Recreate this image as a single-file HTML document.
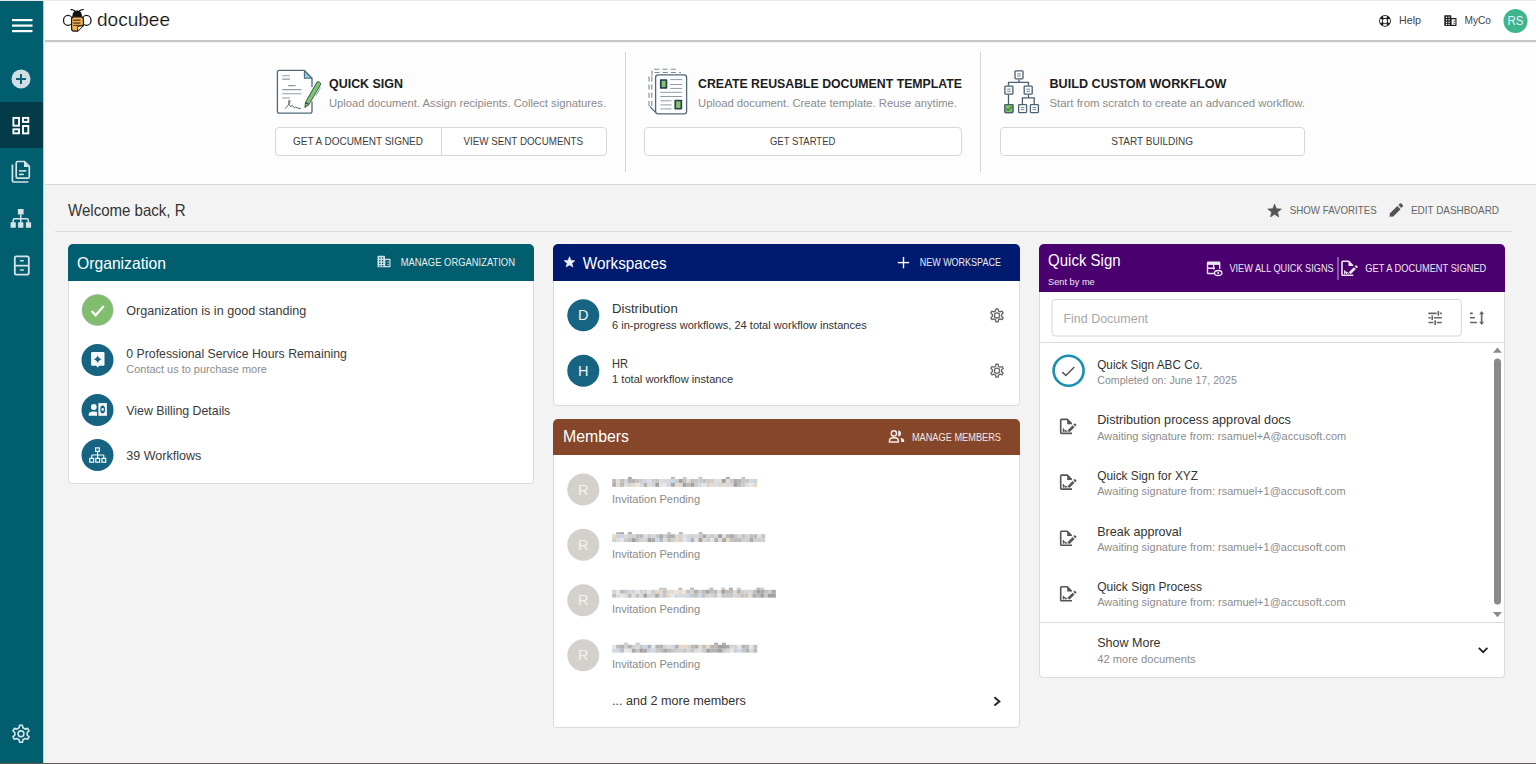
<!DOCTYPE html>
<html><head><meta charset="utf-8">
<style>
html,body{margin:0;padding:0;width:1536px;height:764px;overflow:hidden;background:#f3f3f3}
svg{display:block;font-family:"Liberation Sans",sans-serif}
</style></head><body>
<svg width="1536" height="764" viewBox="0 0 1536 764">
<defs><filter id="bl" x="-5%" y="-50%" width="110%" height="200%"><feGaussianBlur stdDeviation="0.45"/></filter></defs>
<rect x="0" y="0" width="1536" height="764" fill="#f3f3f3" />
<rect x="0" y="0" width="1536" height="1" fill="#e8e8e8" />
<rect x="44" y="1" width="1492" height="39" fill="#ffffff" />
<rect x="44" y="40" width="1492" height="2" fill="#c8c8c8" />
<rect x="44" y="42" width="1492" height="1" fill="#eef3f5" />
<rect x="44" y="43" width="1492" height="141" fill="#fdfdfd" />
<rect x="44" y="184" width="1492" height="1" fill="#d6d9d9" />
<rect x="0" y="1" width="43.5" height="762" fill="#015e6f" />
<rect x="43.5" y="1" width="1.3" height="762" fill="#fbfafa" />
<rect x="0" y="102" width="43" height="46" fill="#033c48" />
<rect x="0" y="763" width="1536" height="1" fill="#5e5a58" />
<text x="97" y="26" font-size="19" fill="#111" textLength="73" lengthAdjust="spacingAndGlyphs" stroke="#fff" stroke-width="0.2">docubee</text>
<text x="1399" y="24.2" font-size="10.8" fill="#444" textLength="22" lengthAdjust="spacingAndGlyphs" >Help</text>
<text x="1464.5" y="24.2" font-size="10.8" fill="#444" textLength="26.5" lengthAdjust="spacingAndGlyphs" >MyCo</text>
<circle cx="1515.5" cy="21" r="12" fill="#3db58d"/>
<text x="1515.5" y="25.3" font-size="12" fill="#eef" textLength="16" lengthAdjust="spacingAndGlyphs" text-anchor="middle" >RS</text>
<rect x="625" y="52" width="1" height="120" fill="#d3d6d7"/>
<rect x="980" y="52" width="1" height="120" fill="#d3d6d7"/>
<text x="329" y="88" font-size="13.6" fill="#1c1c1c" font-weight="bold" textLength="74" lengthAdjust="spacingAndGlyphs" >QUICK SIGN</text>
<text x="329" y="107" font-size="10.8" fill="#8c8c8c" textLength="277" lengthAdjust="spacingAndGlyphs" >Upload document. Assign recipients. Collect signatures.</text>
<text x="698" y="88" font-size="13.6" fill="#1c1c1c" font-weight="bold" textLength="264" lengthAdjust="spacingAndGlyphs" >CREATE REUSABLE DOCUMENT TEMPLATE</text>
<text x="698" y="107" font-size="10.8" fill="#8c8c8c" textLength="259" lengthAdjust="spacingAndGlyphs" >Upload document. Create template. Reuse anytime.</text>
<text x="1049.5" y="88" font-size="13.6" fill="#1c1c1c" font-weight="bold" textLength="177" lengthAdjust="spacingAndGlyphs" >BUILD CUSTOM WORKFLOW</text>
<text x="1049.5" y="107" font-size="10.8" fill="#8c8c8c" textLength="255.5" lengthAdjust="spacingAndGlyphs" >Start from scratch to create an advanced workflow.</text>
<rect x="275.5" y="127.5" width="331" height="28" fill="#fff" rx="3.5" stroke="#d5d8d8" stroke-width="1" />
<rect x="441" y="128" width="1" height="27" fill="#d5d8d8" />
<rect x="644.5" y="127.5" width="317" height="28" fill="#fff" rx="3.5" stroke="#d5d8d8" stroke-width="1" />
<rect x="1000.5" y="127.5" width="304" height="28" fill="#fff" rx="3.5" stroke="#d5d8d8" stroke-width="1" />
<text x="293" y="145" font-size="10.6" fill="#3d3d3d" textLength="130" lengthAdjust="spacingAndGlyphs" >GET A DOCUMENT SIGNED</text>
<text x="463.5" y="145" font-size="10.6" fill="#3d3d3d" textLength="119.5" lengthAdjust="spacingAndGlyphs" >VIEW SENT DOCUMENTS</text>
<text x="770" y="145" font-size="10.6" fill="#3d3d3d" textLength="65.3" lengthAdjust="spacingAndGlyphs" >GET STARTED</text>
<text x="1111.3" y="145" font-size="10.6" fill="#3d3d3d" textLength="81.7" lengthAdjust="spacingAndGlyphs" >START BUILDING</text>
<text x="68" y="216" font-size="16.5" fill="#333" textLength="117.6" lengthAdjust="spacingAndGlyphs" >Welcome back, R</text>
<rect x="55" y="231" width="1457" height="1" fill="#d9dcdc" />
<text x="1289.7" y="214" font-size="11" fill="#666" textLength="87" lengthAdjust="spacingAndGlyphs" >SHOW FAVORITES</text>
<text x="1411" y="214" font-size="11" fill="#666" textLength="88" lengthAdjust="spacingAndGlyphs" >EDIT DASHBOARD</text>
<path d="M68.5 281 V480 a3.5 3.5 0 0 0 3.5 3.5 H530 a3.5 3.5 0 0 0 3.5 -3.5 V281" fill="#fff" stroke="#d9dcdc"/>
<path d="M68 281 V249 a5 5 0 0 1 5 -5 H529 a5 5 0 0 1 5 5 V281 Z" fill="#015e6f"/>
<path d="M553.5 281 V402 a3.5 3.5 0 0 0 3.5 3.5 H1016 a3.5 3.5 0 0 0 3.5 -3.5 V281" fill="#fff" stroke="#d9dcdc"/>
<path d="M553 281 V249 a5 5 0 0 1 5 -5 H1015 a5 5 0 0 1 5 5 V281 Z" fill="#001a6f"/>
<path d="M553.5 455 V724 a3.5 3.5 0 0 0 3.5 3.5 H1016 a3.5 3.5 0 0 0 3.5 -3.5 V455" fill="#fff" stroke="#d9dcdc"/>
<path d="M553 455 V424 a5 5 0 0 1 5 -5 H1015 a5 5 0 0 1 5 5 V455 Z" fill="#85462a"/>
<path d="M1039.5 292 V674 a3.5 3.5 0 0 0 3.5 3.5 H1501 a3.5 3.5 0 0 0 3.5 -3.5 V292" fill="#fff" stroke="#d9dcdc"/>
<path d="M1039 292 V249 a5 5 0 0 1 5 -5 H1500 a5 5 0 0 1 5 5 V292 Z" fill="#4a006e"/>
<text x="77" y="268.8" font-size="16.5" fill="#fff" textLength="89" lengthAdjust="spacingAndGlyphs" >Organization</text>
<text x="400.7" y="266.1" font-size="10.5" fill="#e8eef0" textLength="114.3" lengthAdjust="spacingAndGlyphs" >MANAGE ORGANIZATION</text>
<circle cx="97.6" cy="310" r="15.6" fill="#80bd6d" stroke="#a9b0a8" stroke-width="0.6"/>
<circle cx="97.5" cy="360" r="16" fill="#176482"/>
<circle cx="97.5" cy="410" r="16" fill="#176482"/>
<circle cx="97.5" cy="455" r="16" fill="#176482"/>
<text x="126.3" y="314.9" font-size="12.5" fill="#3a3a3a" textLength="180" lengthAdjust="spacingAndGlyphs" >Organization is in good standing</text>
<text x="126.3" y="357.8" font-size="13" fill="#3a3a3a" textLength="220.6" lengthAdjust="spacingAndGlyphs" >0 Professional Service Hours Remaining</text>
<text x="126.3" y="372.7" font-size="10.7" fill="#8c8c8c" textLength="140.6" lengthAdjust="spacingAndGlyphs" >Contact us to purchase more</text>
<text x="126.3" y="414.9" font-size="13" fill="#3a3a3a" textLength="104" lengthAdjust="spacingAndGlyphs" >View Billing Details</text>
<text x="126.3" y="460.2" font-size="13" fill="#3a3a3a" textLength="75" lengthAdjust="spacingAndGlyphs" >39 Workflows</text>
<text x="582.8" y="268.8" font-size="16.5" fill="#fff" textLength="83.8" lengthAdjust="spacingAndGlyphs" >Workspaces</text>
<text x="919.7" y="266.3" font-size="10.5" fill="#e8ecf4" textLength="81.2" lengthAdjust="spacingAndGlyphs" >NEW WORKSPACE</text>
<circle cx="583.3" cy="315.3" r="16" fill="#176482"/>
<text x="583.3" y="320.3" font-size="14.5" fill="#eef4f6" text-anchor="middle" >D</text>
<circle cx="583.3" cy="370.7" r="16" fill="#176482"/>
<text x="583.3" y="375.7" font-size="14.5" fill="#eef4f6" text-anchor="middle" >H</text>
<text x="612" y="313.3" font-size="13" fill="#333" textLength="65.7" lengthAdjust="spacingAndGlyphs" >Distribution</text>
<text x="612" y="328.75" font-size="11.5" fill="#333" textLength="254.7" lengthAdjust="spacingAndGlyphs" >6 in-progress workflows, 24 total workflow instances</text>
<text x="612" y="367.9" font-size="13" fill="#333" textLength="16" lengthAdjust="spacingAndGlyphs" >HR</text>
<text x="612" y="382.9" font-size="11.5" fill="#333" textLength="121.3" lengthAdjust="spacingAndGlyphs" >1 total workflow instance</text>
<text x="563" y="441.6" font-size="16.5" fill="#fff" textLength="66" lengthAdjust="spacingAndGlyphs" >Members</text>
<text x="911.9" y="440.6" font-size="10.5" fill="#f2e8e2" textLength="89.1" lengthAdjust="spacingAndGlyphs" >MANAGE MEMBERS</text>
<circle cx="583.3" cy="489.5" r="16" fill="#d4d0cb"/>
<text x="583.3" y="494.5" font-size="14.5" fill="#f4f2f0" text-anchor="middle" >R</text>
<g filter="url(#bl)">
<rect x="612.20" y="479.00" width="3.97" height="3.95" fill="#bababa"/>
<rect x="612.20" y="482.90" width="3.97" height="3.95" fill="#b2b2b2"/>
<rect x="616.12" y="479.00" width="3.97" height="3.95" fill="#dedede"/>
<rect x="616.12" y="482.90" width="3.97" height="3.95" fill="#e8d8c4"/>
<rect x="620.04" y="479.00" width="3.97" height="3.95" fill="#c0c0c0"/>
<rect x="620.04" y="482.90" width="3.97" height="3.95" fill="#bababa"/>
<rect x="623.96" y="479.00" width="3.97" height="3.95" fill="#d4d4d4"/>
<rect x="623.96" y="482.90" width="3.97" height="3.95" fill="#dedede"/>
<rect x="627.88" y="479.00" width="3.97" height="3.95" fill="#b2b2b2"/>
<rect x="627.88" y="482.90" width="3.97" height="3.95" fill="#d4d4d4"/>
<rect x="627.88" y="476.90" width="3.92" height="2.1" fill="#aaaaaa"/>
<rect x="631.79" y="479.00" width="3.97" height="3.95" fill="#b2b2b2"/>
<rect x="631.79" y="482.90" width="3.97" height="3.95" fill="#e8d8c4"/>
<rect x="635.71" y="479.00" width="3.97" height="3.95" fill="#c0c0c0"/>
<rect x="635.71" y="482.90" width="3.97" height="3.95" fill="#e6e6e6"/>
<rect x="639.63" y="479.00" width="3.97" height="3.95" fill="#cccccc"/>
<rect x="639.63" y="482.90" width="3.97" height="3.95" fill="#d8d8d8"/>
<rect x="643.55" y="479.00" width="3.97" height="3.95" fill="#c8d8ea"/>
<rect x="643.55" y="482.90" width="3.97" height="3.95" fill="#b2b2b2"/>
<rect x="647.47" y="479.00" width="3.97" height="3.95" fill="#dedede"/>
<rect x="647.47" y="482.90" width="3.97" height="3.95" fill="#dedede"/>
<rect x="651.39" y="479.00" width="3.97" height="3.95" fill="#cccccc"/>
<rect x="651.39" y="482.90" width="3.97" height="3.95" fill="#d4d4d4"/>
<rect x="655.31" y="479.00" width="3.97" height="3.95" fill="#c6c6c6"/>
<rect x="655.31" y="482.90" width="3.97" height="3.95" fill="#a0a0a0"/>
<rect x="659.23" y="479.00" width="3.97" height="3.95" fill="#dedede"/>
<rect x="659.23" y="482.90" width="3.97" height="3.95" fill="#e6e6e6"/>
<rect x="663.15" y="479.00" width="3.97" height="3.95" fill="#d8d8d8"/>
<rect x="663.15" y="482.90" width="3.97" height="3.95" fill="#e6e6e6"/>
<rect x="667.06" y="479.00" width="3.97" height="3.95" fill="#d8d8d8"/>
<rect x="667.06" y="482.90" width="3.97" height="3.95" fill="#c8d8ea"/>
<rect x="670.98" y="479.00" width="3.97" height="3.95" fill="#c8d8ea"/>
<rect x="670.98" y="482.90" width="3.97" height="3.95" fill="#aaaaaa"/>
<rect x="670.98" y="476.90" width="3.92" height="2.1" fill="#b9b9b9"/>
<rect x="674.90" y="479.00" width="3.97" height="3.95" fill="#cccccc"/>
<rect x="674.90" y="482.90" width="3.97" height="3.95" fill="#e8d8c4"/>
<rect x="678.82" y="479.00" width="3.97" height="3.95" fill="#a0a0a0"/>
<rect x="678.82" y="482.90" width="3.97" height="3.95" fill="#d8d8d8"/>
<rect x="682.74" y="479.00" width="3.97" height="3.95" fill="#c0c0c0"/>
<rect x="682.74" y="482.90" width="3.97" height="3.95" fill="#a0a0a0"/>
<rect x="682.74" y="476.90" width="3.92" height="2.1" fill="#c8c8c8"/>
<rect x="686.66" y="479.00" width="3.97" height="3.95" fill="#e8d8c4"/>
<rect x="686.66" y="482.90" width="3.97" height="3.95" fill="#bababa"/>
<rect x="690.58" y="479.00" width="3.97" height="3.95" fill="#c0c0c0"/>
<rect x="690.58" y="482.90" width="3.97" height="3.95" fill="#a0a0a0"/>
<rect x="694.50" y="479.00" width="3.97" height="3.95" fill="#c6c6c6"/>
<rect x="694.50" y="482.90" width="3.97" height="3.95" fill="#cccccc"/>
<rect x="698.42" y="479.00" width="3.97" height="3.95" fill="#cccccc"/>
<rect x="698.42" y="482.90" width="3.97" height="3.95" fill="#d8d8d8"/>
<rect x="698.42" y="476.90" width="3.92" height="2.1" fill="#c8c8c8"/>
<rect x="702.34" y="479.00" width="3.97" height="3.95" fill="#c0c0c0"/>
<rect x="702.34" y="482.90" width="3.97" height="3.95" fill="#e6e6e6"/>
<rect x="706.25" y="479.00" width="3.97" height="3.95" fill="#cccccc"/>
<rect x="706.25" y="482.90" width="3.97" height="3.95" fill="#d4d4d4"/>
<rect x="710.17" y="479.00" width="3.97" height="3.95" fill="#cccccc"/>
<rect x="710.17" y="482.90" width="3.97" height="3.95" fill="#e8d8c4"/>
<rect x="714.09" y="479.00" width="3.97" height="3.95" fill="#dedede"/>
<rect x="714.09" y="482.90" width="3.97" height="3.95" fill="#dedede"/>
<rect x="718.01" y="479.00" width="3.97" height="3.95" fill="#dedede"/>
<rect x="718.01" y="482.90" width="3.97" height="3.95" fill="#d8d8d8"/>
<rect x="721.93" y="479.00" width="3.97" height="3.95" fill="#a0a0a0"/>
<rect x="721.93" y="482.90" width="3.97" height="3.95" fill="#e8d8c4"/>
<rect x="725.85" y="479.00" width="3.97" height="3.95" fill="#dedede"/>
<rect x="725.85" y="482.90" width="3.97" height="3.95" fill="#d8d8d8"/>
<rect x="725.85" y="476.90" width="3.92" height="2.1" fill="#aaaaaa"/>
<rect x="729.77" y="479.00" width="3.97" height="3.95" fill="#c6c6c6"/>
<rect x="729.77" y="482.90" width="3.97" height="3.95" fill="#d8d8d8"/>
<rect x="733.69" y="479.00" width="3.97" height="3.95" fill="#aaaaaa"/>
<rect x="733.69" y="482.90" width="3.97" height="3.95" fill="#a0a0a0"/>
<rect x="737.61" y="479.00" width="3.97" height="3.95" fill="#b2b2b2"/>
<rect x="737.61" y="482.90" width="3.97" height="3.95" fill="#bababa"/>
<rect x="741.52" y="479.00" width="3.97" height="3.95" fill="#c6c6c6"/>
<rect x="741.52" y="482.90" width="3.97" height="3.95" fill="#cccccc"/>
<rect x="741.52" y="476.90" width="3.92" height="2.1" fill="#c8c8c8"/>
<rect x="745.44" y="479.00" width="3.97" height="3.95" fill="#c6c6c6"/>
<rect x="745.44" y="482.90" width="3.97" height="3.95" fill="#dedede"/>
<rect x="749.36" y="479.00" width="3.97" height="3.95" fill="#c8d8ea"/>
<rect x="749.36" y="482.90" width="3.97" height="3.95" fill="#e6e6e6"/>
<rect x="753.28" y="479.00" width="3.97" height="3.95" fill="#d0d0d0"/>
<rect x="753.28" y="482.90" width="3.97" height="3.95" fill="#e8d8c4"/>
</g>
<text x="612" y="502.5" font-size="11.2" fill="#8a8a8a" textLength="88.1" lengthAdjust="spacingAndGlyphs" >Invitation Pending</text>
<circle cx="583.3" cy="544.7" r="16" fill="#d4d0cb"/>
<text x="583.3" y="549.7" font-size="14.5" fill="#f4f2f0" text-anchor="middle" >R</text>
<g filter="url(#bl)">
<rect x="612.20" y="534.20" width="3.97" height="3.95" fill="#e8d8c4"/>
<rect x="612.20" y="538.10" width="3.97" height="3.95" fill="#d0d0d0"/>
<rect x="616.12" y="534.20" width="3.97" height="3.95" fill="#d0d0d0"/>
<rect x="616.12" y="538.10" width="3.97" height="3.95" fill="#dedede"/>
<rect x="616.12" y="532.10" width="3.92" height="2.1" fill="#b9b9b9"/>
<rect x="620.05" y="534.20" width="3.97" height="3.95" fill="#c8d8ea"/>
<rect x="620.05" y="538.10" width="3.97" height="3.95" fill="#e6e6e6"/>
<rect x="620.05" y="532.10" width="3.92" height="2.1" fill="#aaaaaa"/>
<rect x="623.97" y="534.20" width="3.97" height="3.95" fill="#d8d8d8"/>
<rect x="623.97" y="538.10" width="3.97" height="3.95" fill="#cccccc"/>
<rect x="627.89" y="534.20" width="3.97" height="3.95" fill="#d0d0d0"/>
<rect x="627.89" y="538.10" width="3.97" height="3.95" fill="#c0c0c0"/>
<rect x="627.89" y="532.10" width="3.92" height="2.1" fill="#aaaaaa"/>
<rect x="631.82" y="534.20" width="3.97" height="3.95" fill="#d0d0d0"/>
<rect x="631.82" y="538.10" width="3.97" height="3.95" fill="#a0a0a0"/>
<rect x="635.74" y="534.20" width="3.97" height="3.95" fill="#bababa"/>
<rect x="635.74" y="538.10" width="3.97" height="3.95" fill="#c0c0c0"/>
<rect x="639.66" y="534.20" width="3.97" height="3.95" fill="#bababa"/>
<rect x="639.66" y="538.10" width="3.97" height="3.95" fill="#d4d4d4"/>
<rect x="643.58" y="534.20" width="3.97" height="3.95" fill="#dedede"/>
<rect x="643.58" y="538.10" width="3.97" height="3.95" fill="#d4d4d4"/>
<rect x="647.51" y="534.20" width="3.97" height="3.95" fill="#cccccc"/>
<rect x="647.51" y="538.10" width="3.97" height="3.95" fill="#a0a0a0"/>
<rect x="651.43" y="534.20" width="3.97" height="3.95" fill="#c8d8ea"/>
<rect x="651.43" y="538.10" width="3.97" height="3.95" fill="#aaaaaa"/>
<rect x="655.35" y="534.20" width="3.97" height="3.95" fill="#c6c6c6"/>
<rect x="655.35" y="538.10" width="3.97" height="3.95" fill="#c8d8ea"/>
<rect x="659.28" y="534.20" width="3.97" height="3.95" fill="#aaaaaa"/>
<rect x="659.28" y="538.10" width="3.97" height="3.95" fill="#bababa"/>
<rect x="663.20" y="534.20" width="3.97" height="3.95" fill="#cccccc"/>
<rect x="663.20" y="538.10" width="3.97" height="3.95" fill="#dedede"/>
<rect x="667.12" y="534.20" width="3.97" height="3.95" fill="#b2b2b2"/>
<rect x="667.12" y="538.10" width="3.97" height="3.95" fill="#c0c0c0"/>
<rect x="667.12" y="532.10" width="3.92" height="2.1" fill="#c8c8c8"/>
<rect x="671.05" y="534.20" width="3.97" height="3.95" fill="#b2b2b2"/>
<rect x="671.05" y="538.10" width="3.97" height="3.95" fill="#d0d0d0"/>
<rect x="674.97" y="534.20" width="3.97" height="3.95" fill="#e8d8c4"/>
<rect x="674.97" y="538.10" width="3.97" height="3.95" fill="#e8d8c4"/>
<rect x="678.89" y="534.20" width="3.97" height="3.95" fill="#c8d8ea"/>
<rect x="678.89" y="538.10" width="3.97" height="3.95" fill="#d0d0d0"/>
<rect x="678.89" y="532.10" width="3.92" height="2.1" fill="#b9b9b9"/>
<rect x="682.82" y="534.20" width="3.97" height="3.95" fill="#dedede"/>
<rect x="682.82" y="538.10" width="3.97" height="3.95" fill="#e6e6e6"/>
<rect x="686.74" y="534.20" width="3.97" height="3.95" fill="#d4d4d4"/>
<rect x="686.74" y="538.10" width="3.97" height="3.95" fill="#c8d8ea"/>
<rect x="690.66" y="534.20" width="3.97" height="3.95" fill="#d0d0d0"/>
<rect x="690.66" y="538.10" width="3.97" height="3.95" fill="#b2b2b2"/>
<rect x="694.58" y="534.20" width="3.97" height="3.95" fill="#d4d4d4"/>
<rect x="694.58" y="538.10" width="3.97" height="3.95" fill="#e6e6e6"/>
<rect x="698.51" y="534.20" width="3.97" height="3.95" fill="#cccccc"/>
<rect x="698.51" y="538.10" width="3.97" height="3.95" fill="#a0a0a0"/>
<rect x="698.51" y="532.10" width="3.92" height="2.1" fill="#b9b9b9"/>
<rect x="702.43" y="534.20" width="3.97" height="3.95" fill="#aaaaaa"/>
<rect x="702.43" y="538.10" width="3.97" height="3.95" fill="#d8d8d8"/>
<rect x="706.35" y="534.20" width="3.97" height="3.95" fill="#d0d0d0"/>
<rect x="706.35" y="538.10" width="3.97" height="3.95" fill="#cccccc"/>
<rect x="710.28" y="534.20" width="3.97" height="3.95" fill="#c6c6c6"/>
<rect x="710.28" y="538.10" width="3.97" height="3.95" fill="#e6e6e6"/>
<rect x="714.20" y="534.20" width="3.97" height="3.95" fill="#d4d4d4"/>
<rect x="714.20" y="538.10" width="3.97" height="3.95" fill="#b2b2b2"/>
<rect x="718.12" y="534.20" width="3.97" height="3.95" fill="#a0a0a0"/>
<rect x="718.12" y="538.10" width="3.97" height="3.95" fill="#dedede"/>
<rect x="722.05" y="534.20" width="3.97" height="3.95" fill="#dedede"/>
<rect x="722.05" y="538.10" width="3.97" height="3.95" fill="#aaaaaa"/>
<rect x="725.97" y="534.20" width="3.97" height="3.95" fill="#bababa"/>
<rect x="725.97" y="538.10" width="3.97" height="3.95" fill="#e8d8c4"/>
<rect x="729.89" y="534.20" width="3.97" height="3.95" fill="#aaaaaa"/>
<rect x="729.89" y="538.10" width="3.97" height="3.95" fill="#c0c0c0"/>
<rect x="733.82" y="534.20" width="3.97" height="3.95" fill="#c6c6c6"/>
<rect x="733.82" y="538.10" width="3.97" height="3.95" fill="#bababa"/>
<rect x="737.74" y="534.20" width="3.97" height="3.95" fill="#d8d8d8"/>
<rect x="737.74" y="538.10" width="3.97" height="3.95" fill="#bababa"/>
<rect x="741.66" y="534.20" width="3.97" height="3.95" fill="#c0c0c0"/>
<rect x="741.66" y="538.10" width="3.97" height="3.95" fill="#d0d0d0"/>
<rect x="745.58" y="534.20" width="3.97" height="3.95" fill="#d4d4d4"/>
<rect x="745.58" y="538.10" width="3.97" height="3.95" fill="#d0d0d0"/>
<rect x="749.51" y="534.20" width="3.97" height="3.95" fill="#c0c0c0"/>
<rect x="749.51" y="538.10" width="3.97" height="3.95" fill="#aaaaaa"/>
<rect x="753.43" y="534.20" width="3.97" height="3.95" fill="#bababa"/>
<rect x="753.43" y="538.10" width="3.97" height="3.95" fill="#cccccc"/>
<rect x="757.35" y="534.20" width="3.97" height="3.95" fill="#dedede"/>
<rect x="757.35" y="538.10" width="3.97" height="3.95" fill="#cccccc"/>
<rect x="761.28" y="534.20" width="3.97" height="3.95" fill="#c6c6c6"/>
<rect x="761.28" y="538.10" width="3.97" height="3.95" fill="#d0d0d0"/>
</g>
<text x="612" y="557.7" font-size="11.2" fill="#8a8a8a" textLength="88.1" lengthAdjust="spacingAndGlyphs" >Invitation Pending</text>
<circle cx="583.3" cy="600.3" r="16" fill="#d4d0cb"/>
<text x="583.3" y="605.3" font-size="14.5" fill="#f4f2f0" text-anchor="middle" >R</text>
<g filter="url(#bl)">
<rect x="612.20" y="589.80" width="3.95" height="3.95" fill="#d4d4d4"/>
<rect x="612.20" y="593.70" width="3.95" height="3.95" fill="#c0c0c0"/>
<rect x="616.10" y="589.80" width="3.95" height="3.95" fill="#e6e6e6"/>
<rect x="616.10" y="593.70" width="3.95" height="3.95" fill="#dedede"/>
<rect x="619.99" y="589.80" width="3.95" height="3.95" fill="#bababa"/>
<rect x="619.99" y="593.70" width="3.95" height="3.95" fill="#e6e6e6"/>
<rect x="623.89" y="589.80" width="3.95" height="3.95" fill="#c6c6c6"/>
<rect x="623.89" y="593.70" width="3.95" height="3.95" fill="#dedede"/>
<rect x="627.78" y="589.80" width="3.95" height="3.95" fill="#c8d8ea"/>
<rect x="627.78" y="593.70" width="3.95" height="3.95" fill="#bababa"/>
<rect x="631.68" y="589.80" width="3.95" height="3.95" fill="#d4d4d4"/>
<rect x="631.68" y="593.70" width="3.95" height="3.95" fill="#dedede"/>
<rect x="635.57" y="589.80" width="3.95" height="3.95" fill="#e6e6e6"/>
<rect x="635.57" y="593.70" width="3.95" height="3.95" fill="#c0c0c0"/>
<rect x="639.47" y="589.80" width="3.95" height="3.95" fill="#d0d0d0"/>
<rect x="639.47" y="593.70" width="3.95" height="3.95" fill="#d8d8d8"/>
<rect x="643.36" y="589.80" width="3.95" height="3.95" fill="#d4d4d4"/>
<rect x="643.36" y="593.70" width="3.95" height="3.95" fill="#a0a0a0"/>
<rect x="647.26" y="589.80" width="3.95" height="3.95" fill="#e6e6e6"/>
<rect x="647.26" y="593.70" width="3.95" height="3.95" fill="#d0d0d0"/>
<rect x="651.15" y="589.80" width="3.95" height="3.95" fill="#cccccc"/>
<rect x="651.15" y="593.70" width="3.95" height="3.95" fill="#d4d4d4"/>
<rect x="655.05" y="589.80" width="3.95" height="3.95" fill="#e8d8c4"/>
<rect x="655.05" y="593.70" width="3.95" height="3.95" fill="#aaaaaa"/>
<rect x="658.94" y="589.80" width="3.95" height="3.95" fill="#d8d8d8"/>
<rect x="658.94" y="593.70" width="3.95" height="3.95" fill="#d4d4d4"/>
<rect x="658.94" y="587.70" width="3.90" height="2.1" fill="#c8c8c8"/>
<rect x="662.84" y="589.80" width="3.95" height="3.95" fill="#c0c0c0"/>
<rect x="662.84" y="593.70" width="3.95" height="3.95" fill="#c6c6c6"/>
<rect x="662.84" y="587.70" width="3.90" height="2.1" fill="#c8c8c8"/>
<rect x="666.73" y="589.80" width="3.95" height="3.95" fill="#d8d8d8"/>
<rect x="666.73" y="593.70" width="3.95" height="3.95" fill="#e8d8c4"/>
<rect x="670.63" y="589.80" width="3.95" height="3.95" fill="#e8d8c4"/>
<rect x="670.63" y="593.70" width="3.95" height="3.95" fill="#e6e6e6"/>
<rect x="674.52" y="589.80" width="3.95" height="3.95" fill="#e6e6e6"/>
<rect x="674.52" y="593.70" width="3.95" height="3.95" fill="#c8d8ea"/>
<rect x="678.42" y="589.80" width="3.95" height="3.95" fill="#e8d8c4"/>
<rect x="678.42" y="593.70" width="3.95" height="3.95" fill="#d8d8d8"/>
<rect x="678.42" y="587.70" width="3.90" height="2.1" fill="#b9b9b9"/>
<rect x="682.31" y="589.80" width="3.95" height="3.95" fill="#e6e6e6"/>
<rect x="682.31" y="593.70" width="3.95" height="3.95" fill="#d8d8d8"/>
<rect x="686.21" y="589.80" width="3.95" height="3.95" fill="#c0c0c0"/>
<rect x="686.21" y="593.70" width="3.95" height="3.95" fill="#c8d8ea"/>
<rect x="690.10" y="589.80" width="3.95" height="3.95" fill="#d4d4d4"/>
<rect x="690.10" y="593.70" width="3.95" height="3.95" fill="#c6c6c6"/>
<rect x="690.10" y="587.70" width="3.90" height="2.1" fill="#b9b9b9"/>
<rect x="694.00" y="589.80" width="3.95" height="3.95" fill="#aaaaaa"/>
<rect x="694.00" y="593.70" width="3.95" height="3.95" fill="#c0c0c0"/>
<rect x="697.90" y="589.80" width="3.95" height="3.95" fill="#cccccc"/>
<rect x="697.90" y="593.70" width="3.95" height="3.95" fill="#c8d8ea"/>
<rect x="701.79" y="589.80" width="3.95" height="3.95" fill="#bababa"/>
<rect x="701.79" y="593.70" width="3.95" height="3.95" fill="#c0c0c0"/>
<rect x="705.69" y="589.80" width="3.95" height="3.95" fill="#a0a0a0"/>
<rect x="705.69" y="593.70" width="3.95" height="3.95" fill="#d0d0d0"/>
<rect x="709.58" y="589.80" width="3.95" height="3.95" fill="#bababa"/>
<rect x="709.58" y="593.70" width="3.95" height="3.95" fill="#d4d4d4"/>
<rect x="709.58" y="587.70" width="3.90" height="2.1" fill="#b9b9b9"/>
<rect x="713.48" y="589.80" width="3.95" height="3.95" fill="#bababa"/>
<rect x="713.48" y="593.70" width="3.95" height="3.95" fill="#c6c6c6"/>
<rect x="717.37" y="589.80" width="3.95" height="3.95" fill="#e8d8c4"/>
<rect x="717.37" y="593.70" width="3.95" height="3.95" fill="#e6e6e6"/>
<rect x="721.27" y="589.80" width="3.95" height="3.95" fill="#a0a0a0"/>
<rect x="721.27" y="593.70" width="3.95" height="3.95" fill="#c6c6c6"/>
<rect x="721.27" y="587.70" width="3.90" height="2.1" fill="#c8c8c8"/>
<rect x="725.16" y="589.80" width="3.95" height="3.95" fill="#bababa"/>
<rect x="725.16" y="593.70" width="3.95" height="3.95" fill="#c6c6c6"/>
<rect x="729.06" y="589.80" width="3.95" height="3.95" fill="#bababa"/>
<rect x="729.06" y="593.70" width="3.95" height="3.95" fill="#c6c6c6"/>
<rect x="729.06" y="587.70" width="3.90" height="2.1" fill="#aaaaaa"/>
<rect x="732.95" y="589.80" width="3.95" height="3.95" fill="#e8d8c4"/>
<rect x="732.95" y="593.70" width="3.95" height="3.95" fill="#d8d8d8"/>
<rect x="736.85" y="589.80" width="3.95" height="3.95" fill="#b2b2b2"/>
<rect x="736.85" y="593.70" width="3.95" height="3.95" fill="#d0d0d0"/>
<rect x="736.85" y="587.70" width="3.90" height="2.1" fill="#c8c8c8"/>
<rect x="740.74" y="589.80" width="3.95" height="3.95" fill="#d0d0d0"/>
<rect x="740.74" y="593.70" width="3.95" height="3.95" fill="#c0c0c0"/>
<rect x="744.64" y="589.80" width="3.95" height="3.95" fill="#d0d0d0"/>
<rect x="744.64" y="593.70" width="3.95" height="3.95" fill="#c6c6c6"/>
<rect x="748.53" y="589.80" width="3.95" height="3.95" fill="#d4d4d4"/>
<rect x="748.53" y="593.70" width="3.95" height="3.95" fill="#e8d8c4"/>
<rect x="752.43" y="589.80" width="3.95" height="3.95" fill="#c0c0c0"/>
<rect x="752.43" y="593.70" width="3.95" height="3.95" fill="#aaaaaa"/>
<rect x="756.32" y="589.80" width="3.95" height="3.95" fill="#a0a0a0"/>
<rect x="756.32" y="593.70" width="3.95" height="3.95" fill="#bababa"/>
<rect x="756.32" y="587.70" width="3.90" height="2.1" fill="#b9b9b9"/>
<rect x="760.22" y="589.80" width="3.95" height="3.95" fill="#aaaaaa"/>
<rect x="760.22" y="593.70" width="3.95" height="3.95" fill="#a0a0a0"/>
<rect x="760.22" y="587.70" width="3.90" height="2.1" fill="#c8c8c8"/>
<rect x="764.11" y="589.80" width="3.95" height="3.95" fill="#c0c0c0"/>
<rect x="764.11" y="593.70" width="3.95" height="3.95" fill="#c6c6c6"/>
<rect x="768.01" y="589.80" width="3.95" height="3.95" fill="#cccccc"/>
<rect x="768.01" y="593.70" width="3.95" height="3.95" fill="#a0a0a0"/>
<rect x="771.90" y="589.80" width="3.95" height="3.95" fill="#aaaaaa"/>
<rect x="771.90" y="593.70" width="3.95" height="3.95" fill="#a0a0a0"/>
</g>
<text x="612" y="613.3" font-size="11.2" fill="#8a8a8a" textLength="88.1" lengthAdjust="spacingAndGlyphs" >Invitation Pending</text>
<circle cx="583.3" cy="655.3" r="16" fill="#d4d0cb"/>
<text x="583.3" y="660.3" font-size="14.5" fill="#f4f2f0" text-anchor="middle" >R</text>
<g filter="url(#bl)">
<rect x="612.20" y="644.80" width="3.97" height="3.95" fill="#e6e6e6"/>
<rect x="612.20" y="648.70" width="3.97" height="3.95" fill="#d8d8d8"/>
<rect x="616.12" y="644.80" width="3.97" height="3.95" fill="#bababa"/>
<rect x="616.12" y="648.70" width="3.97" height="3.95" fill="#c8d8ea"/>
<rect x="620.04" y="644.80" width="3.97" height="3.95" fill="#b2b2b2"/>
<rect x="620.04" y="648.70" width="3.97" height="3.95" fill="#c0c0c0"/>
<rect x="623.96" y="644.80" width="3.97" height="3.95" fill="#d0d0d0"/>
<rect x="623.96" y="648.70" width="3.97" height="3.95" fill="#e6e6e6"/>
<rect x="623.96" y="642.70" width="3.92" height="2.1" fill="#c8c8c8"/>
<rect x="627.88" y="644.80" width="3.97" height="3.95" fill="#b2b2b2"/>
<rect x="627.88" y="648.70" width="3.97" height="3.95" fill="#e6e6e6"/>
<rect x="631.79" y="644.80" width="3.97" height="3.95" fill="#d0d0d0"/>
<rect x="631.79" y="648.70" width="3.97" height="3.95" fill="#aaaaaa"/>
<rect x="635.71" y="644.80" width="3.97" height="3.95" fill="#d8d8d8"/>
<rect x="635.71" y="648.70" width="3.97" height="3.95" fill="#c6c6c6"/>
<rect x="635.71" y="642.70" width="3.92" height="2.1" fill="#c8c8c8"/>
<rect x="639.63" y="644.80" width="3.97" height="3.95" fill="#c6c6c6"/>
<rect x="639.63" y="648.70" width="3.97" height="3.95" fill="#a0a0a0"/>
<rect x="643.55" y="644.80" width="3.97" height="3.95" fill="#c8d8ea"/>
<rect x="643.55" y="648.70" width="3.97" height="3.95" fill="#aaaaaa"/>
<rect x="647.47" y="644.80" width="3.97" height="3.95" fill="#b2b2b2"/>
<rect x="647.47" y="648.70" width="3.97" height="3.95" fill="#d0d0d0"/>
<rect x="651.39" y="644.80" width="3.97" height="3.95" fill="#e6e6e6"/>
<rect x="651.39" y="648.70" width="3.97" height="3.95" fill="#c8d8ea"/>
<rect x="655.31" y="644.80" width="3.97" height="3.95" fill="#b2b2b2"/>
<rect x="655.31" y="648.70" width="3.97" height="3.95" fill="#c6c6c6"/>
<rect x="659.23" y="644.80" width="3.97" height="3.95" fill="#b2b2b2"/>
<rect x="659.23" y="648.70" width="3.97" height="3.95" fill="#c0c0c0"/>
<rect x="663.15" y="644.80" width="3.97" height="3.95" fill="#d4d4d4"/>
<rect x="663.15" y="648.70" width="3.97" height="3.95" fill="#aaaaaa"/>
<rect x="667.06" y="644.80" width="3.97" height="3.95" fill="#dedede"/>
<rect x="667.06" y="648.70" width="3.97" height="3.95" fill="#bababa"/>
<rect x="670.98" y="644.80" width="3.97" height="3.95" fill="#c8d8ea"/>
<rect x="670.98" y="648.70" width="3.97" height="3.95" fill="#c6c6c6"/>
<rect x="674.90" y="644.80" width="3.97" height="3.95" fill="#b2b2b2"/>
<rect x="674.90" y="648.70" width="3.97" height="3.95" fill="#cccccc"/>
<rect x="678.82" y="644.80" width="3.97" height="3.95" fill="#e8d8c4"/>
<rect x="678.82" y="648.70" width="3.97" height="3.95" fill="#d0d0d0"/>
<rect x="682.74" y="644.80" width="3.97" height="3.95" fill="#e8d8c4"/>
<rect x="682.74" y="648.70" width="3.97" height="3.95" fill="#c6c6c6"/>
<rect x="686.66" y="644.80" width="3.97" height="3.95" fill="#d4d4d4"/>
<rect x="686.66" y="648.70" width="3.97" height="3.95" fill="#d4d4d4"/>
<rect x="690.58" y="644.80" width="3.97" height="3.95" fill="#bababa"/>
<rect x="690.58" y="648.70" width="3.97" height="3.95" fill="#c6c6c6"/>
<rect x="694.50" y="644.80" width="3.97" height="3.95" fill="#aaaaaa"/>
<rect x="694.50" y="648.70" width="3.97" height="3.95" fill="#dedede"/>
<rect x="698.42" y="644.80" width="3.97" height="3.95" fill="#e8d8c4"/>
<rect x="698.42" y="648.70" width="3.97" height="3.95" fill="#dedede"/>
<rect x="702.34" y="644.80" width="3.97" height="3.95" fill="#c0c0c0"/>
<rect x="702.34" y="648.70" width="3.97" height="3.95" fill="#cccccc"/>
<rect x="706.25" y="644.80" width="3.97" height="3.95" fill="#e8d8c4"/>
<rect x="706.25" y="648.70" width="3.97" height="3.95" fill="#a0a0a0"/>
<rect x="710.17" y="644.80" width="3.97" height="3.95" fill="#b2b2b2"/>
<rect x="710.17" y="648.70" width="3.97" height="3.95" fill="#b2b2b2"/>
<rect x="714.09" y="644.80" width="3.97" height="3.95" fill="#bababa"/>
<rect x="714.09" y="648.70" width="3.97" height="3.95" fill="#b2b2b2"/>
<rect x="714.09" y="642.70" width="3.92" height="2.1" fill="#aaaaaa"/>
<rect x="718.01" y="644.80" width="3.97" height="3.95" fill="#a0a0a0"/>
<rect x="718.01" y="648.70" width="3.97" height="3.95" fill="#a0a0a0"/>
<rect x="721.93" y="644.80" width="3.97" height="3.95" fill="#a0a0a0"/>
<rect x="721.93" y="648.70" width="3.97" height="3.95" fill="#c6c6c6"/>
<rect x="721.93" y="642.70" width="3.92" height="2.1" fill="#aaaaaa"/>
<rect x="725.85" y="644.80" width="3.97" height="3.95" fill="#aaaaaa"/>
<rect x="725.85" y="648.70" width="3.97" height="3.95" fill="#d4d4d4"/>
<rect x="729.77" y="644.80" width="3.97" height="3.95" fill="#d4d4d4"/>
<rect x="729.77" y="648.70" width="3.97" height="3.95" fill="#e6e6e6"/>
<rect x="733.69" y="644.80" width="3.97" height="3.95" fill="#d0d0d0"/>
<rect x="733.69" y="648.70" width="3.97" height="3.95" fill="#cccccc"/>
<rect x="737.61" y="644.80" width="3.97" height="3.95" fill="#e6e6e6"/>
<rect x="737.61" y="648.70" width="3.97" height="3.95" fill="#c8d8ea"/>
<rect x="741.52" y="644.80" width="3.97" height="3.95" fill="#b2b2b2"/>
<rect x="741.52" y="648.70" width="3.97" height="3.95" fill="#c6c6c6"/>
<rect x="745.44" y="644.80" width="3.97" height="3.95" fill="#bababa"/>
<rect x="745.44" y="648.70" width="3.97" height="3.95" fill="#b2b2b2"/>
<rect x="749.36" y="644.80" width="3.97" height="3.95" fill="#e6e6e6"/>
<rect x="749.36" y="648.70" width="3.97" height="3.95" fill="#d8d8d8"/>
<rect x="753.28" y="644.80" width="3.97" height="3.95" fill="#c0c0c0"/>
<rect x="753.28" y="648.70" width="3.97" height="3.95" fill="#bababa"/>
</g>
<text x="612" y="668.3" font-size="11.2" fill="#8a8a8a" textLength="88.1" lengthAdjust="spacingAndGlyphs" >Invitation Pending</text>
<text x="612" y="705" font-size="12.5" fill="#333" textLength="133.7" lengthAdjust="spacingAndGlyphs" >... and 2 more members</text>
<text x="1048.1" y="265.6" font-size="16.5" fill="#fff" textLength="72.5" lengthAdjust="spacingAndGlyphs" >Quick Sign</text>
<text x="1048.1" y="284.7" font-size="9.3" fill="#f0e8f4" textLength="46.6" lengthAdjust="spacingAndGlyphs" >Sent by me</text>
<text x="1229.4" y="272.2" font-size="10.5" fill="#efe6f3" textLength="104.3" lengthAdjust="spacingAndGlyphs" >VIEW ALL QUICK SIGNS</text>
<rect x="1337.5" y="257" width="1" height="23" fill="#c7aad6" />
<text x="1365.3" y="272.2" font-size="10.5" fill="#efe6f3" textLength="121" lengthAdjust="spacingAndGlyphs" >GET A DOCUMENT SIGNED</text>
<rect x="1052" y="299.5" width="409.3" height="36.5" fill="#fff" rx="3" stroke="#d5d8d8" stroke-width="1" />
<text x="1063.4" y="322.8" font-size="12" fill="#a8a8a8" textLength="84.7" lengthAdjust="spacingAndGlyphs" >Find Document</text>
<rect x="1040" y="342" width="464" height="1" fill="#d9dcdc" />
<rect x="1040" y="622" width="464" height="1" fill="#d9dcdc" />
<circle cx="1068.6" cy="370.8" r="15" fill="none" stroke="#1b8fb0" stroke-width="2.6"/>
<text x="1097.2" y="368.6" font-size="13.3" fill="#333" textLength="105.3" lengthAdjust="spacingAndGlyphs" >Quick Sign ABC Co.</text>
<text x="1097.2" y="383.90000000000003" font-size="10.7" fill="#8c8c8c" textLength="139.7" lengthAdjust="spacingAndGlyphs" >Completed on: June 17, 2025</text>
<text x="1097.2" y="424.25" font-size="13.3" fill="#333" textLength="193.7" lengthAdjust="spacingAndGlyphs" >Distribution process approval docs</text>
<text x="1097.2" y="439.55" font-size="10.7" fill="#8c8c8c" textLength="249" lengthAdjust="spacingAndGlyphs" >Awaiting signature from: rsamuel+A@accusoft.com</text>
<text x="1097.2" y="479.9" font-size="13.3" fill="#333" textLength="100.8" lengthAdjust="spacingAndGlyphs" >Quick Sign for XYZ</text>
<text x="1097.2" y="495.2" font-size="10.7" fill="#8c8c8c" textLength="248.4" lengthAdjust="spacingAndGlyphs" >Awaiting signature from: rsamuel+1@accusoft.com</text>
<text x="1097.2" y="536.1" font-size="13.3" fill="#333" textLength="84.4" lengthAdjust="spacingAndGlyphs" >Break approval</text>
<text x="1097.2" y="551.4" font-size="10.7" fill="#8c8c8c" textLength="248.4" lengthAdjust="spacingAndGlyphs" >Awaiting signature from: rsamuel+1@accusoft.com</text>
<text x="1097.2" y="591.1" font-size="13.3" fill="#333" textLength="104.7" lengthAdjust="spacingAndGlyphs" >Quick Sign Process</text>
<text x="1097.2" y="606.4" font-size="10.7" fill="#8c8c8c" textLength="248.4" lengthAdjust="spacingAndGlyphs" >Awaiting signature from: rsamuel+1@accusoft.com</text>
<text x="1097.2" y="646.9" font-size="13" fill="#333" textLength="63.4" lengthAdjust="spacingAndGlyphs" >Show More</text>
<text x="1097.2" y="662.5" font-size="11" fill="#8c8c8c" textLength="98.4" lengthAdjust="spacingAndGlyphs" >42 more documents</text>
<rect x="1494" y="358.5" width="7" height="246" fill="#8a8a8a" rx="3.5" />
<rect x="12" y="19" width="20.5" height="2.2" fill="#ffffff" />
<rect x="12" y="24.5" width="20.5" height="2.2" fill="#ffffff" />
<rect x="12" y="30" width="20.5" height="2.2" fill="#ffffff" />
<circle cx="21" cy="79" r="9.5" fill="#cfdde4"/>
<rect x="16" y="78.1" width="10" height="1.9" fill="#025e6f" />
<rect x="20" y="74" width="1.9" height="10" fill="#025e6f" />
<g fill="none" stroke="#fff" stroke-width="1.9"><rect x="13.4" y="117.9" width="5.6" height="7.8"/><rect x="23" y="117.9" width="5.3" height="4"/><rect x="13.4" y="129.3" width="5.6" height="4"/><rect x="23" y="126" width="5.3" height="7.4"/></g>
<g fill="none" stroke="#d6e3e8" stroke-width="1.7" stroke-linejoin="round"><path d="M17.5 161.5 H24.6 L29.3 166.4 V176.8 Q29.3 178.2 27.9 178.2 H17.6 Q16.2 178.2 16.2 176.8 V162.9 Q16.2 161.5 17.6 161.5 Z"/><path d="M12.4 164.5 V180.7 Q12.4 182 13.7 182 H28.3"/></g>
<path d="M24 161.5 L29.5 167 H24 Z" fill="#d6e3e8"/>
<rect x="19" y="170.1" width="7.3" height="1.6" fill="#d6e3e8" />
<rect x="19" y="173.6" width="4.8" height="1.6" fill="#d6e3e8" />
<g fill="#d6e3e8"><rect x="17.9" y="209.1" width="5.7" height="5.5" rx="0.5"/><rect x="10.6" y="222.3" width="5.2" height="5.5" rx="0.5"/><rect x="18.1" y="222.3" width="5.3" height="5.5" rx="0.5"/><rect x="25.9" y="222.3" width="5.2" height="5.5" rx="0.5"/></g>
<path d="M20.75 214.5 V222.5 M13.2 222.5 V220.2 Q13.2 218.8 14.6 218.8 H26.9 Q28.3 218.8 28.3 220.2 V222.5" fill="none" stroke="#d6e3e8" stroke-width="1.5"/>
<rect x="14.8" y="256.4" width="14" height="18.2" rx="1.6" fill="none" stroke="#d6e3e8" stroke-width="1.8"/>
<rect x="14.8" y="264.8" width="14" height="1.7" fill="#d6e3e8" />
<rect x="19.8" y="259.9" width="4.2" height="1.5" fill="#d6e3e8" rx="0.7" />
<rect x="19.8" y="269.2" width="4.2" height="1.5" fill="#d6e3e8" rx="0.7" />
<path d="M19.05 727.81 L19.57 725.32 L22.43 725.32 L22.95 727.81 L25.22 729.12 L27.63 728.32 L29.06 730.80 L27.16 732.49 L27.16 735.11 L29.06 736.80 L27.63 739.28 L25.22 738.48 L22.95 739.79 L22.43 742.28 L19.57 742.28 L19.05 739.79 L16.78 738.48 L14.37 739.28 L12.94 736.80 L14.84 735.11 L14.84 732.49 L12.94 730.80 L14.37 728.32 L16.78 729.12 Z" fill="none" stroke="#d6e3e8" stroke-width="1.6" stroke-linejoin="round"/>
<circle cx="21" cy="733.8" r="2.9" fill="none" stroke="#d6e3e8" stroke-width="1.6"/>
<path d="M995.55 310.93 L995.90 308.89 L998.10 308.89 L998.45 310.93 L1000.14 311.91 L1002.09 311.19 L1003.19 313.10 L1001.60 314.42 L1001.60 316.38 L1003.19 317.70 L1002.09 319.61 L1000.14 318.89 L998.45 319.87 L998.10 321.91 L995.90 321.91 L995.55 319.87 L993.86 318.89 L991.91 319.61 L990.81 317.70 L992.40 316.38 L992.40 314.42 L990.81 313.10 L991.91 311.19 L993.86 311.91 Z" fill="none" stroke="#666" stroke-width="1.3" stroke-linejoin="round"/>
<circle cx="997" cy="315.4" r="2.6" fill="none" stroke="#666" stroke-width="1.3"/>
<path d="M995.55 366.23 L995.90 364.19 L998.10 364.19 L998.45 366.23 L1000.14 367.21 L1002.09 366.49 L1003.19 368.40 L1001.60 369.72 L1001.60 371.68 L1003.19 373.00 L1002.09 374.91 L1000.14 374.19 L998.45 375.17 L998.10 377.21 L995.90 377.21 L995.55 375.17 L993.86 374.19 L991.91 374.91 L990.81 373.00 L992.40 371.68 L992.40 369.72 L990.81 368.40 L991.91 366.49 L993.86 367.21 Z" fill="none" stroke="#666" stroke-width="1.3" stroke-linejoin="round"/>
<circle cx="997" cy="370.7" r="2.6" fill="none" stroke="#666" stroke-width="1.3"/>
<path d="M71 9.7 Q73 9.3 74.8 11 M83.2 9.7 Q81.2 9.3 79.5 11" fill="none" stroke="#111" stroke-width="1.2" stroke-linecap="round"/>
<ellipse cx="68" cy="20.4" rx="4.5" ry="5" fill="#fff" stroke="#1a1a1a" stroke-width="1.3"/>
<ellipse cx="86.5" cy="20.4" rx="4.5" ry="5" fill="#fff" stroke="#1a1a1a" stroke-width="1.3"/>
<path d="M72.3 18 C72.3 12.5 74 10.5 77.2 10.5 C80.4 10.5 82.1 12.5 82.1 18 Z" fill="#111"/>
<path d="M71.6 19.2 Q71.6 16.8 74 16.8 H81 Q83.4 16.8 83.4 19.2 V25.6 L77.6 31.2 H74 Q71.6 31.2 71.6 28.8 Z" fill="#f6b24e" stroke="#151515" stroke-width="1.2"/>
<rect x="73.3" y="19.6" width="7.2" height="1.2" fill="#4a3418" />
<rect x="73.3" y="22.4" width="7.2" height="1.3" fill="#4a3418" />
<path d="M73.3 25.4 H83 M77.6 31 V26.6 L83 25.8" fill="none" stroke="#2a2015" stroke-width="0.9"/>
<path d="M78.3 30.2 V27 L82 26.6 Z" fill="#fff"/>
<circle cx="1385" cy="20.9" r="4.05" fill="none" stroke="#1a1a1a" stroke-width="3.7"/>
<g fill="#eeeeee"><rect x="1383.2" y="15.9" width="3.6" height="2.1"/><rect x="1383.2" y="23.7" width="3.6" height="2.1"/><rect x="1380" y="19.1" width="2.1" height="3.6"/><rect x="1387.9" y="19.1" width="2.1" height="3.6"/></g>
<g transform="translate(1444.3 15.2) scale(1.0)"><rect x="0" y="0" width="7" height="10.7" fill="#1a1a1a" rx="0.6"/><rect x="6.2" y="2.8" width="6" height="7.9" fill="#1a1a1a" rx="0.6"/><rect x="7.3" y="4" width="3.8" height="5.6" fill="#fff"/><rect x="1.6" y="1.4" width="1.3" height="1.3" fill="#fff"/><rect x="1.6" y="3.9" width="1.3" height="1.3" fill="#fff"/><rect x="1.6" y="6.4" width="1.3" height="1.3" fill="#fff"/><rect x="1.6" y="8.6" width="1.3" height="1.3" fill="#fff"/><rect x="4.1" y="1.4" width="1.3" height="1.3" fill="#fff"/><rect x="4.1" y="3.9" width="1.3" height="1.3" fill="#fff"/><rect x="4.1" y="6.4" width="1.3" height="1.3" fill="#fff"/><rect x="4.1" y="8.6" width="1.3" height="1.3" fill="#fff"/><rect x="9.3" y="5.4" width="1.1" height="1.1" fill="#1a1a1a"/><rect x="9.3" y="7.6" width="1.1" height="1.1" fill="#1a1a1a"/></g>
<g transform="translate(377.5 255.8) scale(1.07)"><rect x="0" y="0" width="7" height="10.7" fill="#d3e2e7" rx="0.6"/><rect x="6.2" y="2.8" width="6" height="7.9" fill="#d3e2e7" rx="0.6"/><rect x="7.3" y="4" width="3.8" height="5.6" fill="#035e6f"/><rect x="1.6" y="1.4" width="1.3" height="1.3" fill="#035e6f"/><rect x="1.6" y="3.9" width="1.3" height="1.3" fill="#035e6f"/><rect x="1.6" y="6.4" width="1.3" height="1.3" fill="#035e6f"/><rect x="1.6" y="8.6" width="1.3" height="1.3" fill="#035e6f"/><rect x="4.1" y="1.4" width="1.3" height="1.3" fill="#035e6f"/><rect x="4.1" y="3.9" width="1.3" height="1.3" fill="#035e6f"/><rect x="4.1" y="6.4" width="1.3" height="1.3" fill="#035e6f"/><rect x="4.1" y="8.6" width="1.3" height="1.3" fill="#035e6f"/><rect x="9.3" y="5.4" width="1.1" height="1.1" fill="#d3e2e7"/><rect x="9.3" y="7.6" width="1.1" height="1.1" fill="#d3e2e7"/></g>
<path d="M1274.60 204.00 L1276.42 208.69 L1281.45 208.98 L1277.55 212.16 L1278.83 217.02 L1274.60 214.30 L1270.37 217.02 L1271.65 212.16 L1267.75 208.98 L1272.78 208.69 Z" fill="#555" stroke="#555" stroke-width="0.6" stroke-linejoin="round"/>
<path d="M569.50 256.70 L570.97 260.38 L574.92 260.64 L571.88 263.17 L572.85 267.01 L569.50 264.90 L566.15 267.01 L567.12 263.17 L564.08 260.64 L568.03 260.38 Z" fill="#eef3fa" stroke="#eef3fa" stroke-width="0.6" stroke-linejoin="round"/>
<path d="M1389.5 216.8 L1390 213.3 L1397.3 206 L1400.6 209.3 L1393.3 216.6 Z" fill="#555"/>
<path d="M1398.4 205 L1399.8 203.6 Q1400.6 202.9 1401.4 203.6 L1402.7 204.9 Q1403.4 205.7 1402.7 206.5 L1401.3 207.9 Z" fill="#555"/>
<rect x="897.8" y="261.9" width="11.4" height="1.4" fill="#fff" />
<rect x="902.8" y="256.9" width="1.4" height="11.4" fill="#fff" />
<g fill="none" stroke="#f4ece6" stroke-width="1.5"><circle cx="893.9" cy="433.4" r="2.6"/><path d="M889.5 442 V440.5 Q889.5 437.8 893.9 437.8 Q898.3 437.8 898.3 440.5 V442 Z"/></g>
<path d="M898.2 430.6 A2.8 2.8 0 0 1 898.2 436.2 Z M900.3 437.8 Q904.2 438.3 904.2 441 V442 H901.2 V440.5 Q901.2 438.8 900.3 437.8 Z" fill="#f4ece6"/>
<path d="M994.4 697.2 L999.4 701.4 L994.4 705.6" fill="none" stroke="#222" stroke-width="1.9"/>
<path d="M1478.8 647.9 L1483.1 652.2 L1487.4 647.9" fill="none" stroke="#222" stroke-width="1.8"/>
<path d="M91.6 311 L95.6 315.2 L103.8 306" fill="none" stroke="#fff" stroke-width="2.3"/>
<path d="M92.2 352.1 H103.4 Q104.5 352.1 104.5 353.2 V364.7 Q104.5 365.8 103.4 365.8 H99.3 L97.7 367.6 L96.1 365.8 H92.2 Q91.1 365.8 91.1 364.7 V353.2 Q91.1 352.1 92.2 352.1 Z" fill="#f4f9fb"/>
<path d="M97.7 355.2 Q98.4 358.4 101.9 359.2 Q98.4 360 97.7 363.2 Q97 360 93.5 359.2 Q97 358.4 97.7 355.2 Z" fill="#176482"/>
<circle cx="93.8" cy="407" r="2.9" fill="#f4f9fb"/>
<path d="M88.7 415.8 V414.6 Q88.7 411.4 93.8 411.4 Q97 411.4 97 412.5 V415.8 Z" fill="#f4f9fb"/>
<rect x="98.4" y="403.1" width="8.5" height="12.7" fill="#f4f9fb"/>
<ellipse cx="102.65" cy="409.4" rx="2.4" ry="3.9" fill="#176482"/>
<circle cx="102.65" cy="409.4" r="1.3" fill="#f4f9fb"/>
<g fill="none" stroke="#f4f9fb" stroke-width="1.2"><rect x="95.6" y="447.9" width="3.8" height="3.5"/><rect x="89.8" y="458.4" width="3.8" height="3.8"/><rect x="95.8" y="458.4" width="3.8" height="3.8"/><rect x="101.9" y="458.4" width="3.8" height="3.8"/><path d="M97.6 451.4 V458.4 M91.7 458.4 V455.6 Q91.7 455 92.3 455 H103.2 Q103.8 455 103.8 455.6 V458.4"/></g>
<g fill="none" stroke="#efe6f3" stroke-width="1.4"><path d="M1214 273.5 H1208.1 Q1207.5 273.5 1207.5 272.9 V262.9 Q1207.5 262.3 1208.1 262.3 H1219.1 Q1219.7 262.3 1219.7 262.9 V269"/><path d="M1207.5 268.2 H1215 M1213.6 263.5 V269.5"/></g>
<rect x="1207.5" y="262.3" width="12.2" height="2.6" fill="#efe6f3" />
<ellipse cx="1218.2" cy="273" rx="3.7" ry="2.5" fill="#4a006e" stroke="#efe6f3" stroke-width="1.3"/>
<circle cx="1218.2" cy="273" r="1" fill="#efe6f3"/>
<g transform="translate(1341.3 261) scale(1.0)"><path d="M12 14.3 H1.5 Q0.7 14.3 0.7 13.5 V1.1 Q0.7 0.3 1.5 0.3 H7.3 L11.7 4.8" fill="none" stroke="#efe6f3" stroke-width="1.6" stroke-linejoin="round"/><path d="M7.2 0.4 V5.1 H11.8 Z" fill="#efe6f3"/><path d="M3.3 12.9 V9.2 M3.3 11.6 Q4.3 10.4 5.1 11.3 V12.9 M5.1 12.2 Q6 11.2 7.2 12.7" fill="none" stroke="#efe6f3" stroke-width="1.1"/><path d="M8.4 12.3 L13.6 7.1" stroke="#efe6f3" stroke-width="2.7"/><path d="M14.3 6.4 L15.7 5" stroke="#efe6f3" stroke-width="2.7"/></g>
<g transform="translate(1060 419.1) scale(1.0)"><path d="M12 14.3 H1.5 Q0.7 14.3 0.7 13.5 V1.1 Q0.7 0.3 1.5 0.3 H7.3 L11.7 4.8" fill="none" stroke="#555" stroke-width="1.6" stroke-linejoin="round"/><path d="M7.2 0.4 V5.1 H11.8 Z" fill="#555"/><path d="M3.3 12.9 V9.2 M3.3 11.6 Q4.3 10.4 5.1 11.3 V12.9 M5.1 12.2 Q6 11.2 7.2 12.7" fill="none" stroke="#555" stroke-width="1.1"/><path d="M8.4 12.3 L13.6 7.1" stroke="#555" stroke-width="2.7"/><path d="M14.3 6.4 L15.7 5" stroke="#555" stroke-width="2.7"/></g>
<g transform="translate(1060 474.8) scale(1.0)"><path d="M12 14.3 H1.5 Q0.7 14.3 0.7 13.5 V1.1 Q0.7 0.3 1.5 0.3 H7.3 L11.7 4.8" fill="none" stroke="#555" stroke-width="1.6" stroke-linejoin="round"/><path d="M7.2 0.4 V5.1 H11.8 Z" fill="#555"/><path d="M3.3 12.9 V9.2 M3.3 11.6 Q4.3 10.4 5.1 11.3 V12.9 M5.1 12.2 Q6 11.2 7.2 12.7" fill="none" stroke="#555" stroke-width="1.1"/><path d="M8.4 12.3 L13.6 7.1" stroke="#555" stroke-width="2.7"/><path d="M14.3 6.4 L15.7 5" stroke="#555" stroke-width="2.7"/></g>
<g transform="translate(1060 530.9) scale(1.0)"><path d="M12 14.3 H1.5 Q0.7 14.3 0.7 13.5 V1.1 Q0.7 0.3 1.5 0.3 H7.3 L11.7 4.8" fill="none" stroke="#555" stroke-width="1.6" stroke-linejoin="round"/><path d="M7.2 0.4 V5.1 H11.8 Z" fill="#555"/><path d="M3.3 12.9 V9.2 M3.3 11.6 Q4.3 10.4 5.1 11.3 V12.9 M5.1 12.2 Q6 11.2 7.2 12.7" fill="none" stroke="#555" stroke-width="1.1"/><path d="M8.4 12.3 L13.6 7.1" stroke="#555" stroke-width="2.7"/><path d="M14.3 6.4 L15.7 5" stroke="#555" stroke-width="2.7"/></g>
<g transform="translate(1060 586.5) scale(1.0)"><path d="M12 14.3 H1.5 Q0.7 14.3 0.7 13.5 V1.1 Q0.7 0.3 1.5 0.3 H7.3 L11.7 4.8" fill="none" stroke="#555" stroke-width="1.6" stroke-linejoin="round"/><path d="M7.2 0.4 V5.1 H11.8 Z" fill="#555"/><path d="M3.3 12.9 V9.2 M3.3 11.6 Q4.3 10.4 5.1 11.3 V12.9 M5.1 12.2 Q6 11.2 7.2 12.7" fill="none" stroke="#555" stroke-width="1.1"/><path d="M8.4 12.3 L13.6 7.1" stroke="#555" stroke-width="2.7"/><path d="M14.3 6.4 L15.7 5" stroke="#555" stroke-width="2.7"/></g>
<g stroke="#666" stroke-width="1.6" fill="none"><path d="M1428.4 313.4 H1436.6 M1439.8 313.4 H1441.8 M1438.3 311 V315.8"/><path d="M1428.4 317.8 H1430.6 M1433.8 317.8 H1441.8 M1432.2 315.6 V320"/><path d="M1428.4 322.5 H1433.4 M1436.8 322.5 H1441.8 M1435.2 320.2 V325"/><path d="M1470 313.4 H1472.7 M1470 317.8 H1474.9 M1470 322.5 H1477 M1481.65 312 V324"/></g>
<path d="M1479.2 314.3 L1481.65 311 L1484.1 314.3 Z M1479.2 321.7 L1481.65 325 L1484.1 321.7 Z" fill="#666"/>
<path d="M1062.3 372.1 L1065.9 375.5 L1074.4 367" fill="none" stroke="#555" stroke-width="1.5"/>
<path d="M1493 352.8 L1497.45 347.5 L1501.9 352.8 Z M1493 612 L1497.45 617.3 L1501.9 612 Z" fill="#8a8a8a"/>
<path d="M312 87 V78.3 L304.4 70.4 H279.3 Q277.4 70.4 277.4 72.3 V111.2 Q277.4 113.1 279.3 113.1 H310.1 Q312 113.1 312 111.2 V101.5" fill="#fff" stroke="#4f6a78" stroke-width="1.3" stroke-linejoin="round"/>
<path d="M304.4 70.6 V78.3 H311.8 Z" fill="#8ec8ea" stroke="#4f6a78" stroke-width="1.1" stroke-linejoin="round"/>
<g stroke="#8c9ca6" stroke-width="1.1"><path d="M282.2 75.8 H290 M282.2 79.1 H290 M288 85.6 H295.6 M282.2 89.6 H301.5 M282.2 93.8 H301.5 M282.2 98 H290"/></g>
<path d="M285.2 108.6 Q288 105.5 289.5 103 Q290.8 100.2 289.4 100 Q287.8 100.3 289.2 104.5 Q290.4 107.8 291.6 106 Q292.4 104.6 293.2 106.8 Q294.2 108.4 295.6 107.2 Q297.5 108.2 300.8 108.6" fill="none" stroke="#3e5664" stroke-width="0.9"/>
<g transform="translate(312.2 94.8) rotate(30)"><rect x="-2.1" y="-14.5" width="4.2" height="24.5" rx="1.9" fill="#82c46e" stroke="#3e5a50" stroke-width="0.9"/><path d="M-2.1 10 L0 14.6 L2.1 10 Z" fill="#82c46e" stroke="#3e5a50" stroke-width="0.9" stroke-linejoin="round"/><path d="M2.3 -10 H3.6 V-1" fill="none" stroke="#8ab0c0" stroke-width="0.9"/></g>
<g fill="none" stroke="#7a8c96" stroke-width="1.1" stroke-dasharray="5 3.2"><path d="M652 75.5 V69.8 Q652 69.3 652.5 69.3 H678"/><path d="M649 106 V75 M651.8 106 V76"/><path d="M654.5 72.5 H681"/></g>
<path d="M649.7 106.4 L655.3 112" stroke="#4f6a78" stroke-width="1.2"/>
<rect x="655.6" y="74.9" width="31" height="39" rx="2.6" fill="#fff" stroke="#4f6a78" stroke-width="1.3"/>
<g stroke="#8c9ca6" stroke-width="1.0"><path d="M670.2 79.6 H682.2 M670.2 84.5 H682.2 M670.2 88.4 H682.2 M660.3 92.3 H682.2 M660.3 96.5 H682.2 M660.3 100.8 H671.6 M660.3 104.9 H671.6 M660.3 108.9 H671.6"/></g>
<rect x="659.9" y="79.2" width="7.4" height="9.5" rx="0.8" fill="#23404e"/><rect x="661.6" y="80.8" width="4" height="6.3" fill="#86c26e"/>
<rect x="674.4" y="99.7" width="7.8" height="9.9" rx="0.8" fill="#23404e"/><rect x="676.1" y="101.3" width="4.4" height="6.7" fill="#86c26e"/>
<rect x="1015.0" y="70.89999999999999" width="8" height="8" rx="0.8" fill="#fff" stroke="#4a6070" stroke-width="1.3"/>
<path d="M1017.1999999999999 73.89999999999999 H1020.8 M1017.1999999999999 76.0 H1020.8" stroke="#6e8290" stroke-width="1"/>
<rect x="1004.9" y="86.19999999999999" width="8" height="8" rx="0.8" fill="#fff" stroke="#4a6070" stroke-width="1.3"/>
<path d="M1007.0999999999999 89.19999999999999 H1010.6999999999999 M1007.0999999999999 91.3 H1010.6999999999999" stroke="#6e8290" stroke-width="1"/>
<rect x="1024.2" y="86.19999999999999" width="8" height="8" rx="0.8" fill="#fff" stroke="#4a6070" stroke-width="1.3"/>
<path d="M1026.4 89.19999999999999 H1030.0 M1026.4 91.3 H1030.0" stroke="#6e8290" stroke-width="1"/>
<rect x="1004.9" y="104.6" width="8" height="8" rx="0.8" fill="#fff" stroke="#4a6070" stroke-width="1.3"/>
<path d="M1007.0999999999999 107.6 H1010.6999999999999 M1007.0999999999999 109.7 H1010.6999999999999" stroke="#6e8290" stroke-width="1"/>
<rect x="1018.6" y="104.6" width="8" height="8" rx="0.8" fill="#fff" stroke="#4a6070" stroke-width="1.3"/>
<path d="M1020.8 107.6 H1024.4 M1020.8 109.7 H1024.4" stroke="#6e8290" stroke-width="1"/>
<rect x="1030.3999999999999" y="104.6" width="8" height="8" rx="0.8" fill="#fff" stroke="#4a6070" stroke-width="1.3"/>
<path d="M1032.6 107.6 H1036.2 M1032.6 109.7 H1036.2" stroke="#6e8290" stroke-width="1"/>
<rect x="1004.9" y="104.6" width="8" height="8" rx="0.8" fill="#7cc062" stroke="#4a6070" stroke-width="1.3"/>
<path d="M1006.6 108.8 L1008.3 110.3 L1011.3 106.8" fill="none" stroke="#23404e" stroke-width="1"/>
<path d="M1019 79.5 V82.4 M1008.5 85.8 V82.4 H1028.5 V85.8 M1008.5 94.8 V104.2 M1028.5 94.8 V97.8 M1022.4 104.2 V97.8 H1034.2 V104.2" fill="none" stroke="#4a6070" stroke-width="1.3"/>
</svg></body></html>
